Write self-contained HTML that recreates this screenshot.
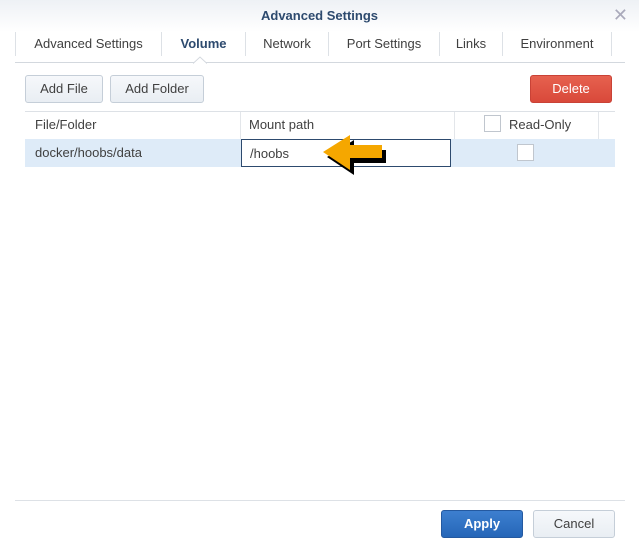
<!DOCTYPE html>
<html><head><style>
*{margin:0;padding:0;box-sizing:border-box}
body{width:639px;height:545px;background:#fff;font-family:"Liberation Sans",sans-serif;font-size:13px;color:#404040;position:relative;overflow:hidden}
.hdr{position:absolute;left:0;top:0;width:639px;height:32px;background:linear-gradient(#eef1f5,#fff)}
.title{position:absolute;top:8px;width:639px;text-align:center;font-weight:bold;font-size:13px;color:#2d4a6e}
.x{position:absolute;right:11px;top:5px;font-size:18px;color:#aab}
.tabs{position:absolute;left:15px;top:32px;width:610px;height:31px;border-bottom:1px solid #d3d8de}
.tab{position:absolute;top:0;height:24px;line-height:24px;border-left:1px solid #dde1e6;text-align:center;color:#404040}
.btn{position:absolute;height:28px;border:1px solid #c5ced8;border-radius:3px;background:linear-gradient(#f6f8fb,#e9eef3);line-height:26px;text-align:center;color:#404040}
.a{position:absolute}
</style></head><body>
<div class="hdr"></div>
<div class="title">Advanced Settings</div>
<div class="x">✕</div>
<div class="tabs">
<div class="tab" style="left:0;width:146px">Advanced Settings</div>
<div class="tab" style="left:146px;width:84px;font-weight:bold;color:#2d4a6e">Volume</div>
<div class="tab" style="left:230px;width:83px">Network</div>
<div class="tab" style="left:313px;width:111px">Port Settings</div>
<div class="tab" style="left:424px;width:63px">Links</div>
<div class="tab" style="left:487px;width:110px;border-right:1px solid #dde1e6">Environment</div>
</div>
<svg class="a" style="left:193px;top:56px" width="14" height="8"><path d="M0 7.5 L7 1 L14 7.5" fill="#fff" stroke="#d3d8de"/></svg>
<div class="btn" style="left:25px;top:75px;width:78px">Add File</div>
<div class="btn" style="left:110px;top:75px;width:94px">Add Folder</div>
<div class="btn" style="left:530px;top:75px;width:82px;background:linear-gradient(#e6614f,#d9493a);border-color:#c94236;color:#fff">Delete</div>
<div class="a" style="left:25px;top:111px;width:590px;height:1px;background:#dde1e6"></div>
<div class="a" style="left:35px;top:117px">File/Folder</div>
<div class="a" style="left:240px;top:112px;width:1px;height:27px;background:#e3e6ea"></div>
<div class="a" style="left:249px;top:117px">Mount path</div>
<div class="a" style="left:454px;top:112px;width:1px;height:27px;background:#e3e6ea"></div>
<div class="a" style="left:598px;top:112px;width:1px;height:27px;background:#e3e6ea"></div>
<div class="a" style="left:484px;top:115px;width:17px;height:17px;border:1px solid #c0c6ce;background:#fff"></div>
<div class="a" style="left:509px;top:117px">Read-Only</div>
<div class="a" style="left:25px;top:139px;width:590px;height:28px;background:#deebf8"></div>
<div class="a" style="left:35px;top:145px">docker/hoobs/data</div>
<div class="a" style="left:241px;top:139px;width:210px;height:28px;border:1px solid #2d4a6e;background:#fff;padding:6px 8px">/hoobs</div>
<div class="a" style="left:517px;top:144px;width:17px;height:17px;border:1px solid #c0c6ce;background:#fff"></div>
<svg class="a" style="left:0;top:0" width="639" height="545">
<polygon points="327,157 354,140 354,150 386,150 386,163 354,163 354,175" fill="#000"/>
<polygon points="323,152 350,135 350,145 382,145 382,158 350,158 350,170" fill="#f5a700"/>
</svg>
<div class="a" style="left:15px;top:500px;width:610px;height:1px;background:#dde1e6"></div>
<div class="btn" style="left:441px;top:510px;width:82px;background:linear-gradient(#3d7fcf,#2566b8);border-color:#2459a0;color:#fff;font-weight:bold">Apply</div>
<div class="btn" style="left:533px;top:510px;width:82px">Cancel</div>
</body></html>
